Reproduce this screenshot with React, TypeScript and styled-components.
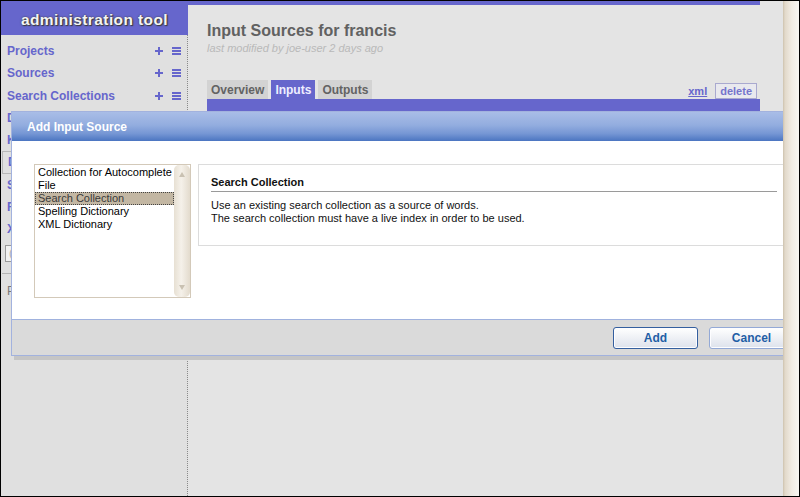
import React from 'react';
import styled, { createGlobalStyle } from 'styled-components';

const purple = '#6666cc';
const sans = '"Liberation Sans", Arial, sans-serif';

const GlobalStyle = createGlobalStyle`
  html, body {
    margin: 0;
    padding: 0;
    background: #fff;
  }
  body {
    font-family: ${sans};
  }
`;

const Frame = styled.div`
  width: 800px;
  height: 497px;
  box-sizing: border-box;
  border: 1px solid #000;
  display: flex;
  overflow: hidden;
`;

const Page = styled.div`
  position: relative;
  flex: 1;
  display: flex;
  overflow: hidden;
`;

const WindowEdge = styled.div`
  width: 16px;
  flex: none;
  background: linear-gradient(to right, #cdc2ae 0, #e2d9ca 2px, #f1ece4 55%, #f8f6f2 100%);
`;

/* ---- sidebar ---- */

const Sidebar = styled.aside`
  width: 187px;
  flex: none;
  display: flex;
  flex-direction: column;
  background: #e0e0e0;
`;

const Banner = styled.div`
  height: 34px;
  box-sizing: border-box;
  padding-top: 3px;
  background: ${purple};
  display: flex;
  align-items: center;
  justify-content: center;
  color: #f4f4f4;
  font: bold 15.5px ${sans};
  letter-spacing: 0.4px;
  text-shadow: 0 0 2px #3a3a3a, 1px 1px 1px #3a3a3a;
`;

const NavPanel = styled.nav`
  flex: 1;
  border-right: 1px dotted #8a8a8a;
  padding: 5px 6px 0 6px;
`;

const NavRow = styled.div<{ $boxed?: boolean }>`
  height: 22.25px;
  display: flex;
  align-items: center;
  box-sizing: border-box;
  ${(p) => (p.$boxed ? 'margin: 0 0 0 -5px; padding-left: 5px; border: 1px solid #b8b8b8;' : '')}
`;

const NavLink = styled.a`
  flex: 1;
  color: ${purple};
  font: bold 12px ${sans};
  text-decoration: none;
`;

const NavTools = styled.div`
  display: flex;
  align-items: center;
  gap: 9px;
`;

const SearchBox = styled.div`
  margin: 5px 0 0 -2px;
  height: 17px;
  box-sizing: border-box;
  border: 1px solid #9a9a9a;
  background: #f2f2f2;
  color: #aaa;
  font: 11px/15px ${sans};
  padding-left: 3px;
`;

const Divider = styled.hr`
  margin: 11px 0 0 -5px;
  border: 0;
  border-top: 1px solid #b4b4b4;
`;

const SideFooter = styled.div`
  margin-top: 10px;
  color: #777;
  font: 12px/14px ${sans};
`;

const PlusIcon = () => (
  <svg width="8" height="8" viewBox="0 0 8 8">
    <rect x="0" y="3" width="8" height="2" fill={purple} />
    <rect x="3" y="0" width="2" height="8" fill={purple} />
  </svg>
);

const ListIcon = () => (
  <svg width="9" height="8" viewBox="0 0 9 8">
    <rect x="0" y="0" width="9" height="2" fill={purple} />
    <rect x="0" y="3" width="9" height="2" fill={purple} />
    <rect x="0" y="6" width="9" height="2" fill={purple} />
  </svg>
);

/* ---- main column ---- */

const Main = styled.main`
  flex: 1;
  background: #e4e4e4;
  display: flex;
  flex-direction: column;
`;

const TopRule = styled.div`
  height: 4px;
  margin-right: 23px;
  background: ${purple};
`;

const Content = styled.div`
  padding: 0 23px 0 19px;
`;

const PageTitle = styled.h1`
  margin: 16px 0 0;
  font: bold 16px/20px ${sans};
  color: #616161;
`;

const Modified = styled.div`
  margin-top: 1px;
  font: italic 11px/13px ${sans};
  color: #b9b9b9;
`;

const TabBar = styled.div`
  margin-top: 25px;
  height: 19px;
  display: flex;
  align-items: stretch;
  gap: 3px;
`;

const Tab = styled.div<{ $active?: boolean }>`
  padding: 0 4px;
  display: flex;
  align-items: center;
  font: bold 12px ${sans};
  color: ${(p) => (p.$active ? '#eeeeff' : '#636363')};
  background: ${(p) => (p.$active ? purple : '#d3d3d3')};
`;

const TabActions = styled.div`
  margin-left: auto;
  margin-right: 3px;
  display: flex;
  align-items: center;
  gap: 8px;
  padding-top: 2px;
`;

const XmlLink = styled.a`
  color: ${purple};
  font: bold 11px ${sans};
  text-decoration: underline;
`;

const DeleteButton = styled.button`
  height: 16px;
  padding: 0 4px;
  border: 1px solid #a9a9cf;
  background: #e9e9ee;
  color: #7474cc;
  font: bold 11px ${sans};
  line-height: 14px;
`;

const TabRule = styled.div`
  height: 12px;
  background: ${purple};
`;

/* ---- dialog ---- */

const Dialog = styled.section`
  position: absolute;
  left: 10px;
  top: 110px;
  width: 800px;
  border: 1px solid #a2b2de;
  background: #fff;
  box-shadow: 3px 4px 0 #c5c5c5;
`;

const DialogTitle = styled.header`
  height: 29px;
  padding-left: 15px;
  display: flex;
  align-items: center;
  background: linear-gradient(#a9bde7 0%, #93addf 45%, #7596d4 75%, #4b75c1 100%);
  color: #fff;
  font: bold 12px ${sans};
`;

const DialogBody = styled.div`
  height: 178px;
  box-sizing: border-box;
  padding: 23px 22px 0;
  display: flex;
  align-items: flex-start;
  gap: 7px;
`;

const ListBox = styled.div`
  width: 157px;
  height: 134px;
  box-sizing: border-box;
  border: 1px solid #d3c9b9;
  display: flex;
`;

const Options = styled.ul`
  flex: 1;
  margin: 0;
  padding: 1px 0 0;
  list-style: none;
`;

const Option = styled.li<{ $selected?: boolean }>`
  height: 13px;
  box-sizing: border-box;
  padding-left: 2px;
  font: 11px/11px ${sans};
  display: flex;
  align-items: center;
  white-space: nowrap;
  color: ${(p) => (p.$selected ? '#3a3a3a' : '#000')};
  background: ${(p) => (p.$selected ? '#c3b7a3' : 'transparent')};
  border: 1px ${(p) => (p.$selected ? 'dotted #444' : 'solid transparent')};
`;

const ScrollTrack = styled.div`
  width: 16px;
  display: flex;
  flex-direction: column;
  justify-content: space-between;
  align-items: center;
  padding: 7px 0;
  box-sizing: border-box;
  border-radius: 5px;
  background: linear-gradient(to right, #e7e0d3, #f5f1ea 45%, #e3dbcd);
`;

const Arrow = styled.span<{ $down?: boolean }>`
  width: 0;
  height: 0;
  border-left: 3px solid transparent;
  border-right: 3px solid transparent;
  ${(p) =>
    p.$down ? 'border-top: 5px solid #c9c1b2;' : 'border-bottom: 5px solid #c9c1b2;'}
`;

const Detail = styled.div`
  flex: 1;
  height: 82px;
  box-sizing: border-box;
  border: 1px solid #dcdcdc;
  padding: 11px 12px 0;
`;

const DetailHeading = styled.h3`
  margin: 0;
  padding-bottom: 2px;
  border-bottom: 1px solid #9a9a9a;
  font: bold 11px/13px ${sans};
  color: #111;
`;

const DetailText = styled.p`
  margin: 7px 0 0;
  font: 11px/13px ${sans};
  color: #111;
`;

const DialogFooter = styled.footer`
  height: 36px;
  box-sizing: border-box;
  border-top: 1px solid #a0b2de;
  background: #dadada;
  display: flex;
  justify-content: flex-end;
  align-items: flex-start;
  gap: 11px;
  padding: 7px 18px 0 0;
`;

const DialogButton = styled.button<{ $focused?: boolean }>`
  width: 85px;
  height: 22px;
  border-radius: 3px;
  border: 1px solid ${(p) => (p.$focused ? '#345f9f' : '#93a9d6')};
  box-shadow: inset 0 0 0 1px #fdfdff;
  background: linear-gradient(#ffffff, #eef0f5 50%, #dde2ec);
  color: #1f5ea6;
  font: bold 12px ${sans};
`;

const sideItems = [
  { label: 'Projects', tools: true },
  { label: 'Sources', tools: true },
  { label: 'Search Collections', tools: true },
  { label: 'Dictionaries', tools: true },
  { label: 'Keyword Lists', tools: true },
  { label: 'Document Types', tools: false, boxed: true },
  { label: 'Stop Words', tools: true },
  { label: 'Filters', tools: true },
  { label: 'XML Schemas', tools: true },
];

const inputTypes = [
  'Collection for Autocomplete',
  'File',
  'Search Collection',
  'Spelling Dictionary',
  'XML Dictionary',
];

export default function App() {
  const selected = 'Search Collection';
  return (
    <>
      <GlobalStyle />
      <Frame>
        <Page>
          <Sidebar>
            <Banner>administration tool</Banner>
            <NavPanel>
              {sideItems.map((item) => (
                <NavRow key={item.label} $boxed={item.boxed}>
                  <NavLink>{item.label}</NavLink>
                  {item.tools && (
                    <NavTools>
                      <PlusIcon />
                      <ListIcon />
                    </NavTools>
                  )}
                </NavRow>
              ))}
              <SearchBox>(</SearchBox>
              <Divider />
              <SideFooter>Preferences</SideFooter>
            </NavPanel>
          </Sidebar>

          <Main>
            <TopRule />
            <Content>
              <PageTitle>Input Sources for francis</PageTitle>
              <Modified>last modified by joe-user 2 days ago</Modified>
              <TabBar>
                <Tab>Overview</Tab>
                <Tab $active>Inputs</Tab>
                <Tab>Outputs</Tab>
                <TabActions>
                  <XmlLink>xml</XmlLink>
                  <DeleteButton>delete</DeleteButton>
                </TabActions>
              </TabBar>
              <TabRule />
            </Content>
          </Main>

          <Dialog>
            <DialogTitle>Add Input Source</DialogTitle>
            <DialogBody>
              <ListBox>
                <Options>
                  {inputTypes.map((t) => (
                    <Option key={t} $selected={t === selected}>
                      {t}
                    </Option>
                  ))}
                </Options>
                <ScrollTrack>
                  <Arrow />
                  <Arrow $down />
                </ScrollTrack>
              </ListBox>
              <Detail>
                <DetailHeading>Search Collection</DetailHeading>
                <DetailText>
                  Use an existing search collection as a source of words.
                  <br />
                  The search collection must have a live index in order to be used.
                </DetailText>
              </Detail>
            </DialogBody>
            <DialogFooter>
              <DialogButton $focused>Add</DialogButton>
              <DialogButton>Cancel</DialogButton>
            </DialogFooter>
          </Dialog>
        </Page>
        <WindowEdge />
      </Frame>
    </>
  );
}
